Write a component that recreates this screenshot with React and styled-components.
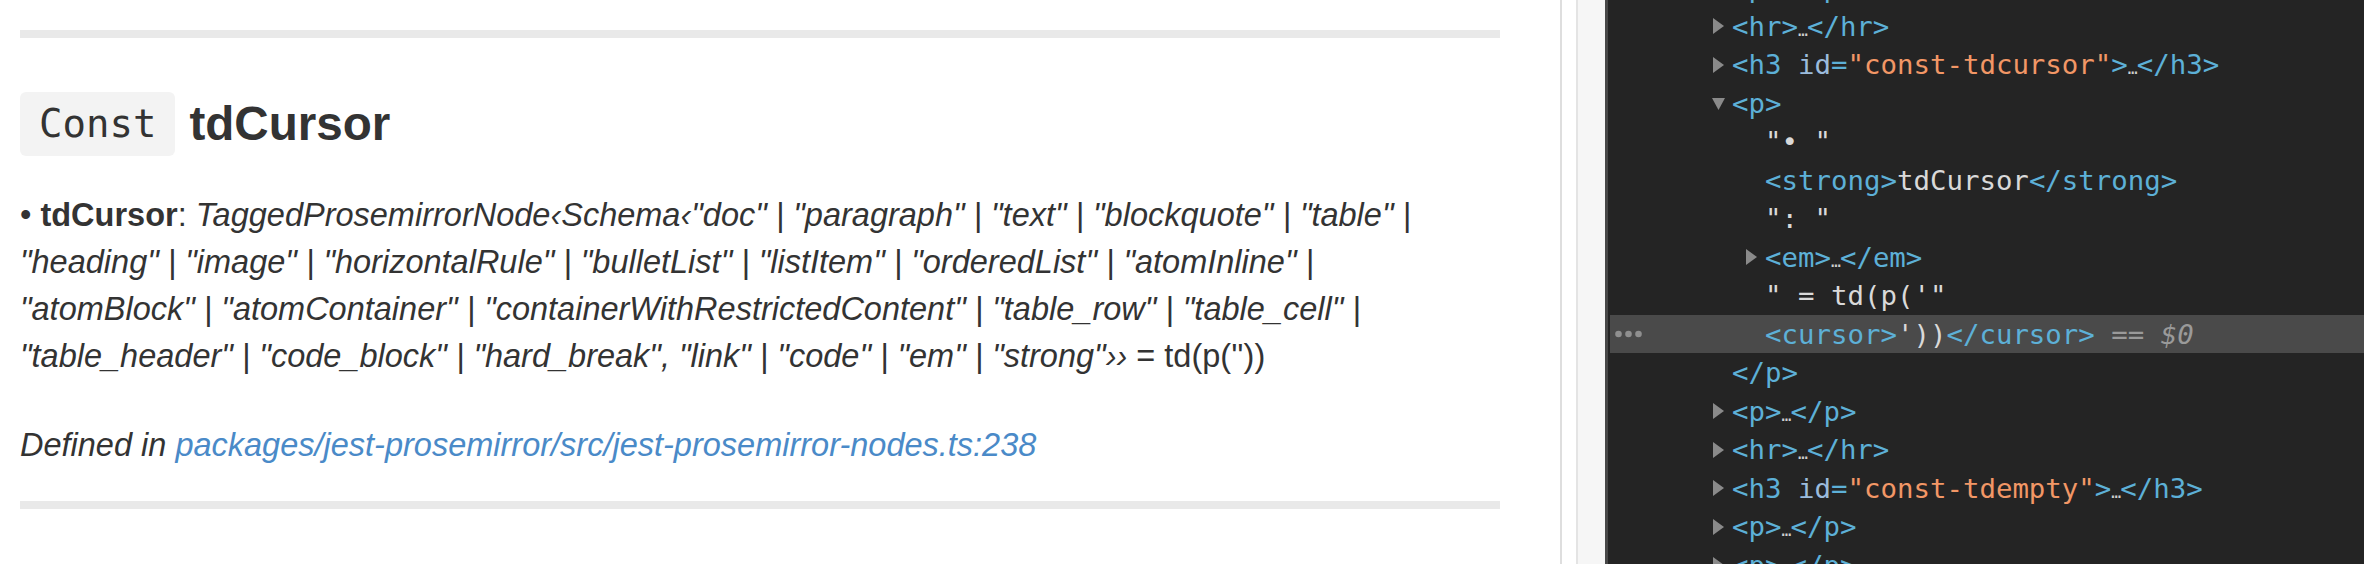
import React from 'react';
import styled, { createGlobalStyle } from 'styled-components';

const GlobalStyle = createGlobalStyle`
  html, body {
    margin: 0;
    padding: 0;
    background: #fff;
  }
  body {
    width: 2364px;
    height: 564px;
    overflow: hidden;
  }
`;

const Screen = styled.div`
  display: flex;
  width: 2364px;
  height: 564px;
  overflow: hidden;
`;

// left side: the rendered doc page
const DocPage = styled.main`
  flex: none;
  width: 1562px;
  box-sizing: border-box;
  padding: 30px 60px 0 20px;
  border-right: 2px solid #dedede;
  background: #fff;
  color: #333;
  font-family: "Liberation Sans", Arial, sans-serif;
`;

const Rule = styled.hr`
  height: 8px;
  margin: ${p => p.top || 0}px 0 0;
  border: 0;
  background: #e9e9e9;
`;

const Title = styled.h3`
  display: flex;
  align-items: center;
  height: 64px;
  margin: 54px 0 0;
  font-size: 47.6px;
  font-weight: 700;
  line-height: 64px;
  color: #333;
`;

const Kind = styled.code`
  height: 64px;
  margin-right: 14px;
  padding: 0 19px;
  border-radius: 6px;
  background: #f3f3f3;
  font-family: "DejaVu Sans Mono", "Liberation Mono", monospace;
  font-size: 39px;
  font-weight: 400;
  line-height: 64px;
  color: #333;
`;

const Signature = styled.p`
  margin: 36px 0 0;
  font-size: 32.5px;
  line-height: 47px;
  white-space: nowrap;

  strong {
    font-weight: 700;
  }
`;

const Defined = styled.p`
  margin: 42px 0 0;
  font-size: 32.5px;
  font-style: italic;
  line-height: 47px;
`;

const Link = styled.a`
  color: #4a8ac8;
  text-decoration: none;
`;

// middle strip: window edge and devtools splitter
const Gap = styled.div`
  flex: none;
  width: 14px;
  background: #fff;
`;

const Splitter = styled.div`
  flex: none;
  width: 27px;
  border-left: 2px solid #e4e4e4;
  border-right: 3px solid #474747;
  background: #f6f6f6;
`;

// right side: elements panel
const DevTools = styled.section`
  flex: 1;
  min-width: 0;
  overflow: hidden;
  background: #242424;
  font-family: "DejaVu Sans Mono", Menlo, monospace;
  font-size: 27.4px;
  color: #d9d9d9;
`;

const Tree = styled.div`
  margin-top: -31.75px;
`;

const Row = styled.div`
  display: flex;
  align-items: center;
  height: 38.5px;
  margin-left: 2px;
  background: ${p => (p.selected ? '#4a4a4a' : 'transparent')};
  white-space: pre;
`;

const Gutter = styled.span`
  flex: none;
  display: flex;
  align-items: center;
  width: 43px;
  padding-left: 5px;
`;

const Line = styled.span`
  display: flex;
  align-items: center;
  padding-left: ${p => p.indent}px;
`;

const Toggle = styled.span`
  flex: none;
  display: flex;
  align-items: center;
  width: 20px;
`;

const Tag = styled.span`
  color: #5db0d7;
`;
const AttrName = styled.span`
  color: #9bbbdc;
`;
const AttrValue = styled.span`
  color: #f29766;
`;
const Ellipsis = styled.span`
  color: #cfcfcf;
  font-size: 0.6em;
  letter-spacing: -1px;
`;
const Hint = styled.span`
  color: #9a9a9a;
  font-style: ${p => (p.italic ? 'italic' : 'normal')};
`;

const Triangle = ({ open }) => (
  <svg width="13" height="16" viewBox="0 0 13 16">
    {open ? (
      <path d="M0 3 L13 3 L6.5 15 Z" fill="#8a8a8a" />
    ) : (
      <path d="M1 0 L12 8 L1 16 Z" fill="#8a8a8a" />
    )}
  </svg>
);

const Dots = () => (
  <svg width="27" height="8" viewBox="0 0 27 8">
    <circle cx="3.5" cy="4" r="3.3" fill="#8f8f8f" />
    <circle cx="13.5" cy="4" r="3.3" fill="#8f8f8f" />
    <circle cx="23.5" cy="4" r="3.3" fill="#8f8f8f" />
  </svg>
);

const Collapsed = ({ name, attr }) => (
  <>
    <Tag>&lt;{name}</Tag>
    {attr && (
      <>
        {' '}
        <AttrName>id</AttrName>
        <Tag>=</Tag>
        <AttrValue>"{attr}"</AttrValue>
      </>
    )}
    <Tag>&gt;</Tag>
    <Ellipsis>…</Ellipsis>
    <Tag>&lt;/{name}&gt;</Tag>
  </>
);

const LEVEL = { 1: 54, 2: 87 };

const nodes = [
  { level: 1, toggle: 'closed', body: <Collapsed name="p" /> },
  { level: 1, toggle: 'closed', body: <Collapsed name="hr" /> },
  { level: 1, toggle: 'closed', body: <Collapsed name="h3" attr="const-tdcursor" /> },
  { level: 1, toggle: 'open', body: <Tag>&lt;p&gt;</Tag> },
  { level: 2, body: '"• "' },
  {
    level: 2,
    body: (
      <>
        <Tag>&lt;strong&gt;</Tag>tdCursor<Tag>&lt;/strong&gt;</Tag>
      </>
    ),
  },
  { level: 2, body: '": "' },
  { level: 2, toggle: 'closed', body: <Collapsed name="em" /> },
  { level: 2, body: `" = td(p('"` },
  {
    level: 2,
    selected: true,
    body: (
      <>
        <Tag>&lt;cursor&gt;</Tag>'))<Tag>&lt;/cursor&gt;</Tag>
        {' '}
        <Hint>==</Hint> <Hint italic>$0</Hint>
      </>
    ),
  },
  { level: 1, body: <Tag>&lt;/p&gt;</Tag> },
  { level: 1, toggle: 'closed', body: <Collapsed name="p" /> },
  { level: 1, toggle: 'closed', body: <Collapsed name="hr" /> },
  { level: 1, toggle: 'closed', body: <Collapsed name="h3" attr="const-tdempty" /> },
  { level: 1, toggle: 'closed', body: <Collapsed name="p" /> },
  { level: 1, toggle: 'closed', body: <Collapsed name="p" /> },
];

const Q = ({ children }) => <>"{children}"</>;

export default function App() {
  return (
    <>
      <GlobalStyle />
      <Screen>
        <DocPage>
          <Rule />
          <Title>
            <Kind>Const</Kind>
            tdCursor
          </Title>
          <Signature>
            • <strong>tdCursor</strong>:{' '}
            <em>
              TaggedProsemirrorNode‹Schema‹<Q>doc</Q> | <Q>paragraph</Q> | <Q>text</Q> |{' '}
              <Q>blockquote</Q> | <Q>table</Q> |
              <br />
              <Q>heading</Q> | <Q>image</Q> | <Q>horizontalRule</Q> | <Q>bulletList</Q> |{' '}
              <Q>listItem</Q> | <Q>orderedList</Q> | <Q>atomInline</Q> |
              <br />
              <Q>atomBlock</Q> | <Q>atomContainer</Q> | <Q>containerWithRestrictedContent</Q> |{' '}
              <Q>table_row</Q> | <Q>table_cell</Q> |
              <br />
              <Q>table_header</Q> | <Q>code_block</Q> | <Q>hard_break</Q>, <Q>link</Q> |{' '}
              <Q>code</Q> | <Q>em</Q> | <Q>strong</Q>››
            </em>{' '}
            = td(p(''))
          </Signature>
          <Defined>
            Defined in{' '}
            <Link href="#">packages/jest-prosemirror/src/jest-prosemirror-nodes.ts:238</Link>
          </Defined>
          <Rule top={32} />
        </DocPage>
        <Gap />
        <Splitter />
        <DevTools>
          <Tree>
            {nodes.map((n, i) => (
              <Row key={i} selected={n.selected}>
                <Gutter>{n.selected && <Dots />}</Gutter>
                <Line indent={LEVEL[n.level]}>
                  <Toggle>{n.toggle && <Triangle open={n.toggle === 'open'} />}</Toggle>
                  <span>{n.body}</span>
                </Line>
              </Row>
            ))}
          </Tree>
        </DevTools>
      </Screen>
    </>
  );
}
